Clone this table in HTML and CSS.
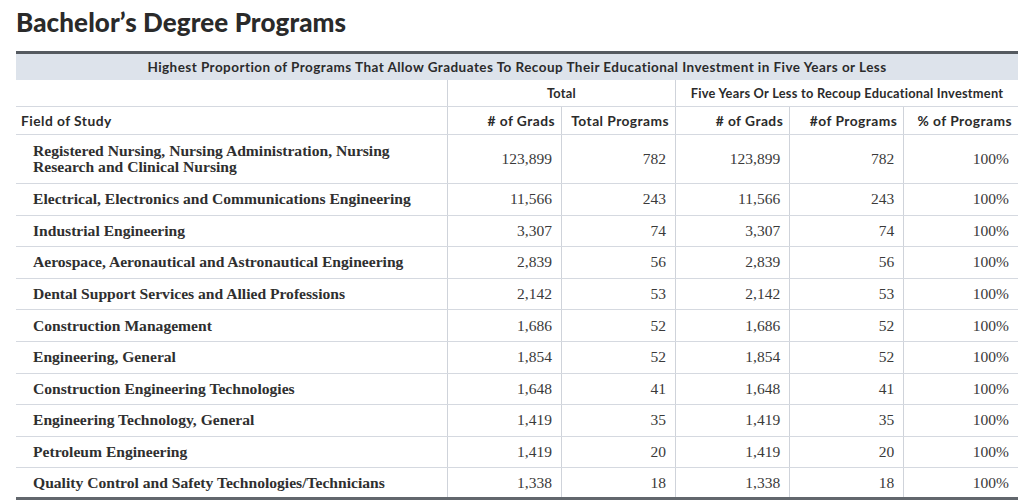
FILE: index.html
```html
<!DOCTYPE html>
<html>
<head>
<meta charset="utf-8">
<link rel="stylesheet" href="styles.css">
</head>
<body>
<h1 class="title">Bachelor’s Degree Programs</h1>
<table class="data">
  <colgroup>
    <col class="c-field"><col class="c-num"><col class="c-num"><col class="c-num"><col class="c-num"><col class="c-num">
  </colgroup>
  <thead>
    <tr class="band"><th colspan="6">Highest Proportion of Programs That Allow Graduates To Recoup Their Educational Investment in Five Years or Less</th></tr>
    <tr class="group"><th class="blank"></th><th colspan="2" class="vl">Total</th><th colspan="3" class="vl">Five Years Or Less to Recoup Educational Investment</th></tr>
    <tr class="cols"><th class="field">Field of Study</th><th class="vl">#&nbsp;of Grads</th><th class="vl">Total Programs</th><th class="vl">#&nbsp;of Grads</th><th class="vl">#of Programs</th><th class="vl">%&nbsp;of Programs</th></tr>
  </thead>
  <tbody>
    <tr class="tall"><td class="name">Registered Nursing, Nursing Administration, Nursing<br>Research and Clinical Nursing</td><td>123,899</td><td>782</td><td>123,899</td><td>782</td><td>100%</td></tr>
    <tr><td class="name">Electrical, Electronics and Communications Engineering</td><td>11,566</td><td>243</td><td>11,566</td><td>243</td><td>100%</td></tr>
    <tr><td class="name">Industrial Engineering</td><td>3,307</td><td>74</td><td>3,307</td><td>74</td><td>100%</td></tr>
    <tr><td class="name">Aerospace, Aeronautical and Astronautical Engineering</td><td>2,839</td><td>56</td><td>2,839</td><td>56</td><td>100%</td></tr>
    <tr><td class="name">Dental Support Services and Allied Professions</td><td>2,142</td><td>53</td><td>2,142</td><td>53</td><td>100%</td></tr>
    <tr><td class="name">Construction Management</td><td>1,686</td><td>52</td><td>1,686</td><td>52</td><td>100%</td></tr>
    <tr><td class="name">Engineering, General</td><td>1,854</td><td>52</td><td>1,854</td><td>52</td><td>100%</td></tr>
    <tr><td class="name">Construction Engineering Technologies</td><td>1,648</td><td>41</td><td>1,648</td><td>41</td><td>100%</td></tr>
    <tr><td class="name">Engineering Technology, General</td><td>1,419</td><td>35</td><td>1,419</td><td>35</td><td>100%</td></tr>
    <tr><td class="name">Petroleum Engineering</td><td>1,419</td><td>20</td><td>1,419</td><td>20</td><td>100%</td></tr>
    <tr class="last"><td class="name">Quality Control and Safety Technologies/Technicians</td><td>1,338</td><td>18</td><td>1,338</td><td>18</td><td>100%</td></tr>
  </tbody>
</table>
</body>
</html>
```

FILE: styles.css
```css
html, body {
  margin: 0;
  padding: 0;
  background: #ffffff;
}
body {
  padding: 0 6px 0 16px;
  color: #333333;
}
.title {
  margin: 0;
  padding-top: 7px;
  height: 51px;
  box-sizing: border-box;
  font-family: Lato, "Noto Sans", sans-serif;
  font-weight: 900;
  font-size: 26px;
  line-height: 30px;
  color: #2a2a2a;
  letter-spacing: 0.1px;
}
.data {
  width: 1002px;
  border-collapse: collapse;
  table-layout: fixed;
  border-top: 3px solid #555a60;
  border-bottom: 3px solid #62676d;
}
.c-field { width: 431px; }
.c-num { width: 114px; }
th {
  font-family: Lato, "Noto Sans", sans-serif;
  font-weight: 700;
  font-size: 13.5px;
  letter-spacing: 0.45px;
  color: #2b2b2b;
  padding: 0 6px;
  white-space: nowrap;
}
.band th {
  background: #dde3eb;
  height: 26px;
  text-align: center;
  padding: 0;
}
.group th {
  height: 26px;
  text-align: center;
  font-size: 12.8px;
  letter-spacing: 0.25px;
  border-bottom: 1px solid #d5d9e0;
}
.cols th {
  height: 27px;
  text-align: right;
  font-size: 13.8px;
  border-bottom: 1px solid #d5d9e0;
}
.cols th.field {
  text-align: left;
  padding-left: 5px;
}
.vl {
  border-left: 1px solid #cfd3da;
}
td {
  font-family: "Liberation Serif", "DejaVu Serif", serif;
  font-size: 15.5px;
  color: #3a3a3a;
  height: 30.6px;
  padding: 0 9px 0 0;
  text-align: right;
  border-bottom: 1px solid #d5d9e0;
  border-left: 1px solid #cfd3da;
  vertical-align: middle;
  white-space: nowrap;
}
td.name {
  border-left: none;
  text-align: left;
  padding-left: 17px;
  font-weight: 700;
  font-size: 15.6px;
  color: #2f2f2f;
  line-height: 16px;
}
tr.tall td {
  height: 48px;
}
tr.last td {
  border-bottom: none;
  height: 29px;
}
```
